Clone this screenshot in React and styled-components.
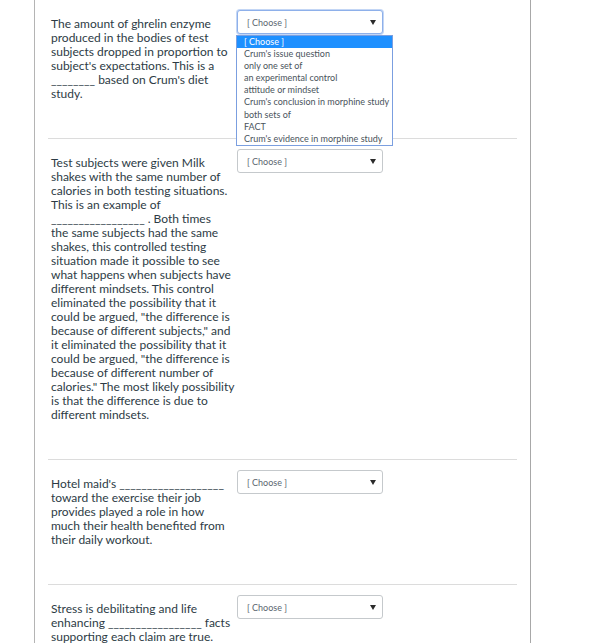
import React from "react";
import styled, { createGlobalStyle } from "styled-components";

const GlobalStyle = createGlobalStyle`
  html, body {
    margin: 0;
    padding: 0;
    background: #fff;
  }
  body {
    font-family: Lato, "Liberation Sans", sans-serif;
    color: #2d3b45;
  }
`;

const Page = styled.div`
  margin-left: 34px;
  width: 497px;
  min-height: 100vh;
  border-left: 1px solid #b4b4b4;
  border-right: 1px solid #a8a8a8;
  box-sizing: border-box;
`;

const Row = styled.div`
  margin-left: 13px;
  width: 469px;
  display: flex;
  align-items: flex-start;
  padding: 10px 0 37px 3px;
  box-sizing: border-box;
  border-bottom: 1px solid #dcdcdc;
`;

const Question = styled.div`
  width: 184px;
  margin-right: 2px;
  margin-top: 7px;
  font-size: 12px;
  line-height: 14px;
  color: #2d3b45;
  white-space: pre-line;
`;

const SelectWrap = styled.div`
  position: relative;
`;

const SelectBox = styled.div`
  width: 146px;
  height: 24px;
  box-sizing: border-box;
  border: 1px solid ${(p) => (p.$open ? "#8eb0ea" : "#c5c9cc")};
  box-shadow: ${(p) => (p.$open ? "0 0 0 1px #c3d6f5" : "none")};
  border-radius: 3px;
  background: #fff;
  display: flex;
  align-items: center;
  justify-content: space-between;
  padding: 0 6px 0 9px;
  font-size: 9px;
  color: #5b6670;
`;

const Arrow = styled.svg`
  width: 6px;
  height: 5px;
  display: block;
`;

const OptionList = styled.ul`
  position: absolute;
  top: 25px;
  left: -1px;
  margin: 0;
  padding: 0;
  list-style: none;
  background: #fff;
  border: 1px solid #7b9fe0;
  z-index: 2;
`;

const Option = styled.li`
  height: 12.1px;
  line-height: 12px;
  padding: 0 3px 0 7px;
  font-size: 9px;
  white-space: nowrap;
  color: ${(p) => (p.$active ? "#fff" : "#4a545c")};
  background: ${(p) => (p.$active ? "#1e90ff" : "#fff")};
`;

const options = [
  "[ Choose ]",
  "Crum's issue question",
  "only one set of",
  "an experimental control",
  "attitude or mindset",
  "Crum's conclusion in morphine study",
  "both sets of",
  "FACT",
  "Crum's evidence in morphine study",
];

const questions = [
  {
    text: "The amount of ghrelin enzyme produced in the bodies of test subjects dropped in proportion to subject's expectations. This is a ________ based on Crum's diet study.",
    open: true,
  },
  {
    text: "Test subjects were given Milk shakes with the same number of calories in both testing situations. This is an example of _________________ . Both times\nthe same subjects had the same shakes, this controlled testing situation made it possible to see what happens when subjects have different mindsets. This control eliminated the possibility that it could be argued, \"the difference is because of different subjects,\" and it eliminated the possibility that it could be argued, \"the difference is because of different number of calories.\" The most likely possibility is that the difference is due to different mindsets.",
  },
  {
    text: "Hotel maid's ___________________ toward the exercise their job provides played a role in how much their health benefited from their daily workout.",
  },
  {
    text: "Stress is debilitating and life enhancing _________________ facts supporting each claim are true.",
  },
];

const Dropdown = ({ open }) => (
  <SelectWrap>
    <SelectBox $open={open}>
      <span>[ Choose ]</span>
      <Arrow viewBox="0 0 6 5">
        <polygon points="0,0 6,0 3,5" fill="#2b2b2b" />
      </Arrow>
    </SelectBox>
    {open && (
      <OptionList>
        {options.map((o, i) => (
          <Option key={o} $active={i === 0}>
            {o}
          </Option>
        ))}
      </OptionList>
    )}
  </SelectWrap>
);

const App = () => (
  <>
    <GlobalStyle />
    <Page>
      {questions.map((q, i) => (
        <Row key={i}>
          <Question>{q.text}</Question>
          <Dropdown open={q.open} />
        </Row>
      ))}
    </Page>
  </>
);

export default App;
